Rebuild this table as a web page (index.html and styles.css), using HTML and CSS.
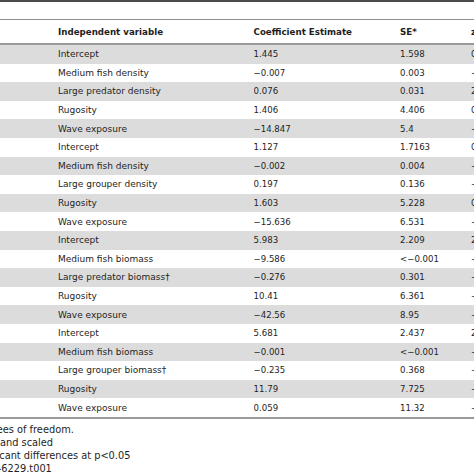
FILE: index.html
```html
<!DOCTYPE html>
<html>
<head>
<meta charset="utf-8">
<link rel="stylesheet" href="styles.css">
</head>
<body>
<div class="page">
  <div class="topbar"></div>
  <div class="caption"></div>
  <table class="tbl">
    <colgroup>
      <col class="c1"><col class="c2"><col class="c3"><col class="c4"><col class="c5">
    </colgroup>
    <thead>
      <tr><th></th><th>Independent variable</th><th>Coefficient Estimate</th><th>SE*</th><th>z value</th></tr>
    </thead>
    <tbody>
      <tr><td></td><td>Intercept</td><td class="num">1.445</td><td class="num">1.598</td><td class="num">0.904</td></tr>
      <tr><td></td><td>Medium fish density</td><td class="num">−0.007</td><td class="num">0.003</td><td class="num">−2.333</td></tr>
      <tr><td></td><td>Large predator density</td><td class="num">0.076</td><td class="num">0.031</td><td class="num">2.452</td></tr>
      <tr><td></td><td>Rugosity</td><td class="num">1.406</td><td class="num">4.406</td><td class="num">0.319</td></tr>
      <tr><td></td><td>Wave exposure</td><td class="num">−14.847</td><td class="num">5.4</td><td class="num">−2.749</td></tr>
      <tr><td></td><td>Intercept</td><td class="num">1.127</td><td class="num">1.7163</td><td class="num">0.657</td></tr>
      <tr><td></td><td>Medium fish density</td><td class="num">−0.002</td><td class="num">0.004</td><td class="num">−0.500</td></tr>
      <tr><td></td><td>Large grouper density</td><td class="num">0.197</td><td class="num">0.136</td><td class="num">−1.449</td></tr>
      <tr><td></td><td>Rugosity</td><td class="num">1.603</td><td class="num">5.228</td><td class="num">0.307</td></tr>
      <tr><td></td><td>Wave exposure</td><td class="num">−15.636</td><td class="num">6.531</td><td class="num">−2.394</td></tr>
      <tr><td></td><td>Intercept</td><td class="num">5.983</td><td class="num">2.209</td><td class="num">2.708</td></tr>
      <tr><td></td><td>Medium fish biomass</td><td class="num">−9.586</td><td class="num">&lt;−0.001</td><td class="num">−3.061</td></tr>
      <tr><td></td><td>Large predator biomass†</td><td class="num">−0.276</td><td class="num">0.301</td><td class="num">−0.917</td></tr>
      <tr><td></td><td>Rugosity</td><td class="num">10.41</td><td class="num">6.361</td><td class="num">−1.637</td></tr>
      <tr><td></td><td>Wave exposure</td><td class="num">−42.56</td><td class="num">8.95</td><td class="num">−4.755</td></tr>
      <tr><td></td><td>Intercept</td><td class="num">5.681</td><td class="num">2.437</td><td class="num">2.331</td></tr>
      <tr><td></td><td>Medium fish biomass</td><td class="num">−0.001</td><td class="num">&lt;−0.001</td><td class="num">−1.914</td></tr>
      <tr><td></td><td>Large grouper biomass†</td><td class="num">−0.235</td><td class="num">0.368</td><td class="num">−0.639</td></tr>
      <tr><td></td><td>Rugosity</td><td class="num">11.79</td><td class="num">7.725</td><td class="num">−1.526</td></tr>
      <tr><td></td><td>Wave exposure</td><td class="num">0.059</td><td class="num">11.32</td><td class="num">−0.005</td></tr>
    </tbody>
  </table>
  <div class="notes">
    <div class="note n1">degrees of freedom.</div>
    <div class="note n2">and scaled</div>
    <div class="note n3">Significant differences at p&lt;0.05</div>
    <div class="note n4">pone.0046229.t001</div>
  </div>
</div>
</body>
</html>
```

FILE: styles.css
```css
html, body {
  margin: 0;
  padding: 0;
  background: #ffffff;
  overflow: hidden;
}
.page {
  width: 474px;
  height: 474px;
  overflow: hidden;
  font-family: "DejaVu Sans", "Open Sans", sans-serif;
  color: #1e1e1e;
}
.topbar {
  height: 2px;
  background: #4a4a4a;
}
.caption {
  height: 17px;
  border-bottom: 1px solid #8c8c8c;
}
.tbl {
  border-collapse: collapse;
  table-layout: fixed;
  width: 570px;
  font-size: 9px;
}
.c1 { width: 58px; }
.c2 { width: 195.5px; }
.c3 { width: 146.5px; }
.c4 { width: 71px; }
.c5 { width: 99px; }
.tbl th {
  text-align: left;
  font-weight: 700;
  font-size: 8.7px;
  height: 23px;
  padding: 0;
  border-bottom: 2px solid #9a9a9a;
  white-space: nowrap;
}
.tbl td {
  height: 18.6px;
  padding: 0;
  white-space: nowrap;
  overflow: hidden;
}
.tbl td.num {
  font-size: 8.6px;
}
.tbl tbody tr:nth-child(odd) td {
  background: #dcdcdc;
}
.tbl tbody tr:last-child td {
  border-bottom: 2px solid #9a9a9a;
}
.notes {
  padding-top: 4px;
  font-size: 9.8px;
  line-height: 13px;
}
.note {
  white-space: nowrap;
}
.n1 { text-indent: -25.5px; }
.n2 { text-indent: 0; }
.n3 { text-indent: -31px; }
.n4 { text-indent: -45px; }
```
